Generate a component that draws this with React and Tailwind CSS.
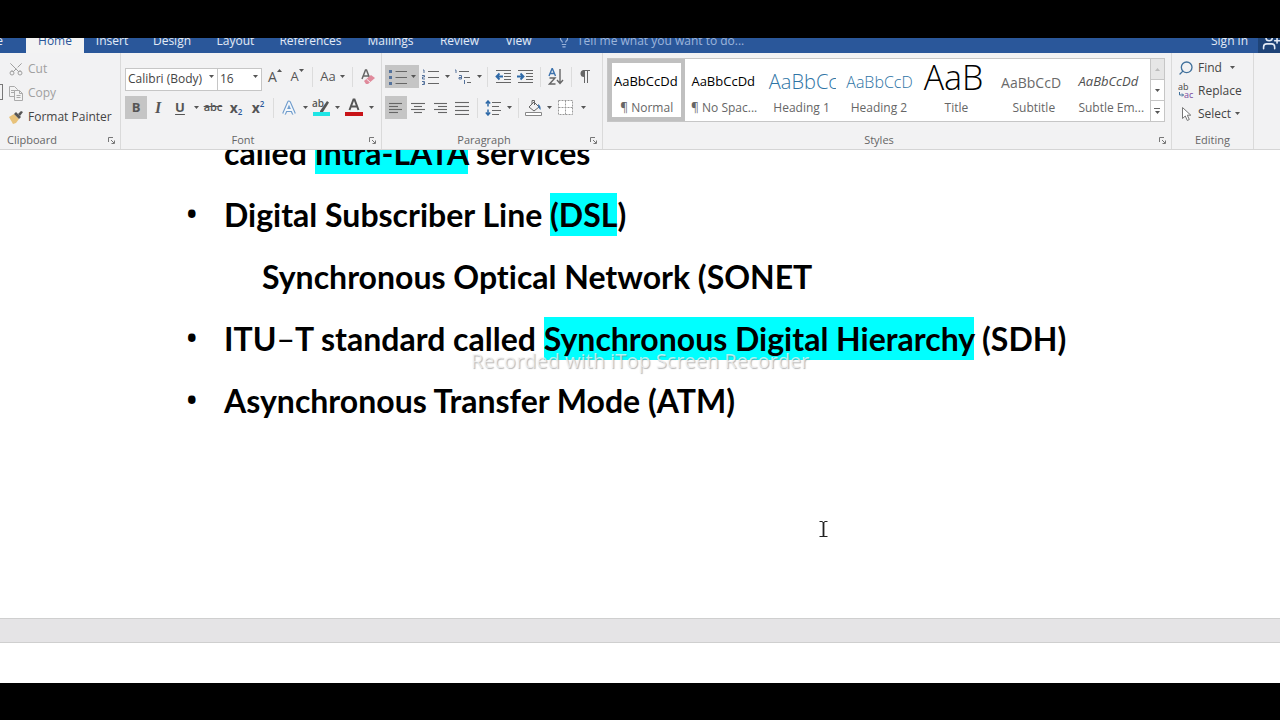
import {
  Scissors,
  Search,
  Lightbulb,
  UserPlus,
  MousePointer2,
} from "lucide-react";

const tabs = [
  { name: "Insert", width: "w-[56px]" },
  { name: "Design", width: "w-[64px]" },
  { name: "Layout", width: "w-[63px]" },
  { name: "References", width: "w-[87px]" },
  { name: "Mailings", width: "w-[73px]" },
  { name: "Review", width: "w-[65px]" },
  { name: "View", width: "w-[53px]" },
];

const styles = [
  { name: "¶ Normal", sample: "AaBbCcDd", look: "text-[13px] text-black", active: true },
  { name: "¶ No Spac...", sample: "AaBbCcDd", look: "text-[13px] text-black" },
  { name: "Heading 1", sample: "AaBbCc", look: "text-[20px] font-light text-[#2e74a5]" },
  { name: "Heading 2", sample: "AaBbCcD", look: "text-[16px] font-light text-[#2e74a5]" },
  { name: "Title", sample: "AaB", look: "text-[34px] leading-6 font-light text-black" },
  { name: "Subtitle", sample: "AaBbCcD", look: "text-[14px] text-[#6a6a6a]" },
  { name: "Subtle Em...", sample: "AaBbCcDd", look: "text-[13px] italic text-[#505050]" },
];

function Caret() {
  return (
    <svg width="5" height="3" viewBox="0 0 5 3" className="shrink-0" fill="#555">
      <path d="M0 0h5L2.5 3z" />
    </svg>
  );
}

function CaretButton({ label }) {
  return (
    <button aria-label={label} className="flex h-full w-[10px] shrink-0 items-center justify-center">
      <Caret />
    </button>
  );
}

function Tool({ label, width = "w-[22px]", active, children }) {
  return (
    <button
      aria-label={label}
      className={`flex h-full shrink-0 items-center justify-center ${width} ${
        active ? "bg-[#c5c5c5]" : ""
      }`}
    >
      {children}
    </button>
  );
}

function Separator() {
  return <div className="mx-1 h-5 w-px shrink-0 bg-[#dcdcdc]" />;
}

function Lines({ rows }) {
  return (
    <svg width="14" height="14" viewBox="0 0 14 14" stroke="#666" strokeWidth="1.1">
      {rows.map(([x1, x2, y]) => (
        <path key={y} d={`M${x1} ${y}H${x2}`} />
      ))}
    </svg>
  );
}

function Group({ name, width, align = "text-center", launcher = true, children }) {
  return (
    <section className={`flex shrink-0 flex-col border-r border-[#dadada] ${width}`}>
      <div className="h-[78px]">{children}</div>
      <div className="flex h-[18px] items-center">
        <h2 className={`flex-1 text-[11px] leading-4 text-[#666] ${align}`}>{name}</h2>
        {launcher && (
          <button aria-label={`${name} settings`} className="mr-1 ml-1 w-2">
            <svg width="7" height="7" viewBox="0 0 7 7" fill="none" stroke="#777">
              <path d="M.5 5V.5H5M3 3l3 3M6.5 3.5v3h-3" />
            </svg>
          </button>
        )}
      </div>
    </section>
  );
}

function TabBar() {
  return (
    <nav className="flex h-[15px] items-end overflow-hidden bg-[#2a579a] text-[12px] text-[#e4ebf5]">
      <a href="#file" className="flex h-6 w-[26px] shrink-0 items-center justify-start overflow-hidden">
        <span className="-ml-4">File</span>
      </a>
      <a
        href="#home"
        className="flex h-6 w-[58px] shrink-0 items-center justify-center bg-[#f3f3f3] text-[#2a579a]"
      >
        Home
      </a>
      {tabs.map((tab) => (
        <a
          key={tab.name}
          href={`#${tab.name}`}
          className={`flex h-6 shrink-0 items-center justify-center ${tab.width}`}
        >
          {tab.name}
        </a>
      ))}
      <button className="ml-3 flex h-6 items-center gap-1.5 text-[#9db5da]">
        <Lightbulb size={14} strokeWidth={2} />
        Tell me what you want to do...
      </button>
      <a href="#signin" className="ml-auto flex h-6 items-center pr-2.5">
        Sign in
      </a>
      <button aria-label="Share" className="flex h-6 w-[22px] items-center overflow-hidden bg-[#1e4377] pl-1">
        <UserPlus size={19} strokeWidth={2} className="shrink-0" />
      </button>
    </nav>
  );
}

function ClipboardGroup() {
  return (
    <Group name="Clipboard" width="w-[121px]" align="pl-[7px] text-left">
      <div className="flex h-full">
        <div className="flex w-2 flex-col justify-center">
          <div className="h-4 w-[3px] border border-l-0 border-[#777]" />
        </div>
        <div className="flex flex-col pt-1 text-[12px] text-[#a0a0a0]">
          <button className="flex h-6 items-center gap-1">
            <Scissors size={16} strokeWidth={1.5} className="-rotate-90" />
            Cut
          </button>
          <button className="flex h-6 items-center gap-1">
            <svg width="16" height="16" viewBox="0 0 16 16" fill="#f3f3f3" stroke="#aaa">
              <path d="M1.5 1.5h5l3 3v7h-8zM3 5.500h4M3 7.500h4" />
              <path d="M6.500 5.500h5l3 3v7h-8zM11.500 5.500v3h3M8.500 10.500h4M8.500 12.500h4" />
            </svg>
            Copy
          </button>
          <button className="flex h-6 items-center gap-1 whitespace-nowrap text-[#444]">
            <svg width="16" height="16" viewBox="0 0 16 16">
              <path d="M1 8l5-3 5 5-3 4-3 1z" fill="#e8c27a" />
              <path d="M6 5l2-2 5 5-2 2z" fill="#555" />
              <path d="M10 5l3-3 2 1-3 4z" fill="#555" />
            </svg>
            Format Painter
          </button>
        </div>
      </div>
    </Group>
  );
}

function FontGroup() {
  return (
    <Group name="Font" width="w-[261px]">
      <div className="flex flex-col gap-2 pt-3 pl-1 text-[#555]">
        <div className="flex h-[23px] items-center">
          <div className="relative h-full">
            <select
              aria-label="Font"
              className="h-full w-[93px] appearance-none border border-[#c6c6c6] bg-white pr-3 pl-0.5 text-[12px] text-[#444]"
            >
              <option>Calibri (Body)</option>
            </select>
            <span className="pointer-events-none absolute top-2.5 right-1">
              <Caret />
            </span>
          </div>
          <div className="relative -ml-px h-full">
            <select
              aria-label="Font size"
              className="h-full w-[45px] appearance-none border border-[#c6c6c6] bg-white pl-0.5 text-[12px] text-[#444]"
            >
              <option>16</option>
            </select>
            <span className="pointer-events-none absolute top-2.5 right-1">
              <Caret />
            </span>
          </div>
          <div className="w-[2px]" />
          <Tool label="Grow font">
            <span className="text-[14px] font-medium">A</span>
            <svg width="5" height="15" viewBox="0 0 5 15" fill="#555">
              <path d="M0 3h5L2.500 0z" />
            </svg>
          </Tool>
          <Tool label="Shrink font">
            <span className="text-[13px] font-medium">A</span>
            <svg width="5" height="15" viewBox="0 0 5 15" fill="#555">
              <path d="M0 0h5L2.500 3z" />
            </svg>
          </Tool>
          <Separator />
          <Tool label="Change case" width="w-[31px]">
            <span className="mr-1 text-[13px] font-medium">Aa</span>
            <Caret />
          </Tool>
          <Separator />
          <Tool label="Clear formatting">
            <svg width="16" height="16" viewBox="0 0 16 16" fill="none">
              <path d="M2 10L5.500 1h1L10 10M3.200 7h5.500" stroke="#666" strokeWidth="1.500" />
              <path d="M4 12l7-6 4 3-7 6H6z" fill="#e08a9b" />
              <path d="M6.500 10l4 3.500" stroke="#f3f3f3" />
            </svg>
          </Tool>
        </div>
        <div className="flex h-[23px] items-center">
          <Tool label="Bold" active>
            <span className="text-[13px] font-bold">B</span>
          </Tool>
          <Tool label="Italic">
            <span className="font-['Liberation_Serif',serif] text-[16px] font-bold italic">I</span>
          </Tool>
          <Tool label="Underline">
            <span className="text-[13px] font-bold underline underline-offset-2">U</span>
          </Tool>
          <CaretButton label="Underline style" />
          <Tool label="Strikethrough" width="w-[24px]">
            <span className="text-[11px] font-semibold line-through">abc</span>
          </Tool>
          <Tool label="Subscript">
            <span className="text-[14px] font-bold">x</span>
            <span className="pt-2 text-[8px] font-semibold text-[#2a579a]">2</span>
          </Tool>
          <Tool label="Superscript">
            <span className="text-[14px] font-bold">x</span>
            <span className="pb-2 text-[8px] font-semibold text-[#2a579a]">2</span>
          </Tool>
          <Separator />
          <Tool label="Text effects">
            <svg width="16" height="16" viewBox="0 0 16 16" fill="none" strokeLinejoin="round">
              <path d="M3 14L8 2.500 13 14M5 10h6" stroke="#6f9ccc" strokeWidth="4" />
              <path d="M3 14L8 2.500 13 14M5 10h6" stroke="#f3f7fb" strokeWidth="1.800" />
            </svg>
          </Tool>
          <CaretButton label="Text effects options" />
          <Tool label="Highlight colour" width="w-[22px]">
            <svg width="19" height="19" viewBox="0 0 19 19">
              <text x="0" y="9" fontSize="10" fontWeight="600" fill="#555">ab</text>
              <path d="M8 13l7-10 2 1.500-6 9.500-3 1z" fill="#555" />
              <path d="M1 14h17v4H1z" fill="#1fe5e5" />
            </svg>
          </Tool>
          <CaretButton label="Highlight options" />
          <Tool label="Font colour" width="w-[24px]">
            <svg width="18" height="19" viewBox="0 0 18 19" fill="none">
              <path d="M4.500 12L8.500 1.500h1L13.500 12M6 8.500h6" stroke="#555" strokeWidth="2" />
              <path d="M0 14h18v4H0z" fill="#c81318" />
            </svg>
          </Tool>
          <CaretButton label="Font colour options" />
        </div>
      </div>
    </Group>
  );
}

function ParagraphGroup() {
  return (
    <Group name="Paragraph" width="w-[221px]">
      <div className="flex flex-col gap-2 pt-3 pl-[3px] text-[#555]">
        <div className="flex h-[23px] items-center">
          <Tool label="Bullets" width="w-[34px]" active>
            <svg width="18" height="16" viewBox="0 0 18 16" className="mr-1">
              <path d="M6.500 2.500H18M6.500 8.500H18M6.500 14.500H18" stroke="#666" />
              <path d="M0 1h3v3H0zM0 7h3v3H0zM0 13h3v3H0z" fill="#54729c" />
            </svg>
            <Caret />
          </Tool>
          <Tool label="Numbering" width="w-[34px]">
            <svg width="17" height="16" viewBox="0 0 17 16" className="mr-1.5" fill="none">
              <path d="M6 2.500h11M6 8.500h11M6 14.500h11" stroke="#666" />
              <path d="M1 1h1v3M0 6.500h2.500v1.500H.5V10H3M0 12.500h2.500v3H0M1 14h1" stroke="#54729c" />
            </svg>
            <Caret />
          </Tool>
          <Tool label="Multilevel list" width="w-[30px]">
            <svg width="17" height="16" viewBox="0 0 17 16" className="mr-1.5" fill="none">
              <path d="M5 2.500h10M10 8.500h6M13 13.500h4" stroke="#666" />
              <path d="M1 1h1v3M5 6.500h2.500V10H5V8.500h2M10.500 11v4M10 12.500h1" stroke="#54729c" />
            </svg>
            <Caret />
          </Tool>
          <Separator />
          <Tool label="Decrease indent">
            <svg width="16" height="15" viewBox="0 0 16 15" fill="none">
              <path d="M1 1.500h15M9 4.500h7M9 7.500h7M9 10.500h7M1 13.500h15" stroke="#666" />
              <path d="M8 7.500H1.500M4.500 4.500l-3 3 3 3" stroke="#2f6aa8" strokeWidth="1.800" />
            </svg>
          </Tool>
          <Tool label="Increase indent">
            <svg width="16" height="15" viewBox="0 0 16 15" fill="none">
              <path d="M1 1.500h15M9 4.500h7M9 7.500h7M9 10.500h7M1 13.500h15" stroke="#666" />
              <path d="M0 7.500h6.500M3.500 4.500l3 3-3 3" stroke="#2f6aa8" strokeWidth="1.800" />
            </svg>
          </Tool>
          <Separator />
          <Tool label="Sort">
            <svg width="16" height="17" viewBox="0 0 16 17" fill="none">
              <path d="M1 8L4 .8h.4L7.500 8M2 5.500h4.500" stroke="#3c72ad" strokeWidth="1.400" />
              <path d="M1.500 10h5.500l-5.500 6H7.500" stroke="#666" strokeWidth="1.400" />
              <path d="M12 1v14M9 12l3 3.500 3-3.500" stroke="#666" strokeWidth="1.400" />
            </svg>
          </Tool>
          <Separator />
          <Tool label="Show paragraph marks" width="w-[16px]">
            <svg width="11" height="13" viewBox="0 0 11 13">
              <path d="M5 0a3.500 3.500 0 0 0 0 7z" fill="#666" />
              <path d="M5.500 0v13M8.500 0v13M4 .5h7" stroke="#666" />
            </svg>
          </Tool>
        </div>
        <div className="flex h-[23px] items-center">
          <Tool label="Align left" active>
            <Lines rows={[[0, 13, 2.5], [0, 9, 5.5], [0, 13, 8.5], [0, 9, 11.5]]} />
          </Tool>
          <Tool label="Centre">
            <Lines rows={[[0, 14, 2.5], [3, 11, 5.5], [0, 14, 8.5], [3, 11, 11.5]]} />
          </Tool>
          <Tool label="Align right">
            <Lines rows={[[1, 14, 2.5], [5, 14, 5.5], [1, 14, 8.5], [5, 14, 11.5]]} />
          </Tool>
          <Tool label="Justify">
            <Lines rows={[[0, 14, 1.5], [0, 14, 5.5], [0, 14, 9.5], [0, 14, 13.5]]} />
          </Tool>
          <Separator />
          <Tool label="Line spacing" width="w-[32px]">
            <svg width="16" height="16" viewBox="0 0 16 16" className="mr-1.5" fill="none">
              <path d="M7 2.500h9M7 6.500h7M7 10.500h9M7 14.500h7" stroke="#666" />
              <path d="M3 1.500v5M.8 3.500L3 1l2.200 2.500M3 9.500v5M.8 12.500L3 15l2.200-2.500" stroke="#2f6aa8" strokeWidth="1.500" />
            </svg>
            <Caret />
          </Tool>
          <Separator />
          <Tool label="Shading" width="w-[30px]">
            <svg width="18" height="17" viewBox="0 0 18 17" className="mr-1" fill="none">
              <path d="M4 8l5-5 5 5-5 4zM7 5V1.500h2.500V6" stroke="#666" />
              <path d="M13 5c2 1 3 3 2.500 6C14 10 13 8 13 5z" fill="#3c72ad" />
              <path d="M.5 13.500h16v3H.5z" fill="#fff" stroke="#888" />
            </svg>
            <Caret />
          </Tool>
          <Tool label="Borders" width="w-[38px]">
            <svg width="15" height="15" viewBox="0 0 15 15" className="mr-2" fill="#fff">
              <path d="M.5.5h14v14H.5zM7.500.5v14M.5 7.500h14" stroke="#999" strokeDasharray="2 1" />
            </svg>
            <Caret />
          </Tool>
        </div>
      </div>
    </Group>
  );
}

function StylesGroup() {
  return (
    <Group name="Styles" width="min-w-0 flex-1">
      <div className="pt-[5px] pr-[6px] pl-1">
        <div className="flex h-[64px] border border-[#c6c6c6] bg-white">
          {styles.map((style) => (
            <button
              key={style.name}
              className={`flex min-w-0 flex-1 flex-col justify-end overflow-hidden border-4 ${
                style.active ? "border-[#c0c0c0]" : "border-transparent"
              }`}
            >
              <span
                className={`flex h-[34px] w-full overflow-hidden pl-0.5 whitespace-nowrap ${style.look} ${
                  style.name === "Title" ? "items-start" : "items-center"
                }`}
              >
                {style.sample}
              </span>
              <span className="flex h-[18px] w-full items-center justify-center text-[12px] whitespace-nowrap text-[#666]">
                {style.name}
              </span>
            </button>
          ))}
          <div className="flex w-[14px] flex-col divide-y divide-[#c6c6c6] border-l border-[#c6c6c6]">
            <button aria-label="Previous styles" className="flex flex-1 items-center justify-center bg-[#e6e6e6]">
              <svg width="5" height="3" viewBox="0 0 5 3" fill="#bbb">
                <path d="M0 3h5L2.500 0z" />
              </svg>
            </button>
            <button aria-label="Next styles" className="flex flex-1 items-center justify-center">
              <Caret />
            </button>
            <button aria-label="All styles" className="flex flex-1 flex-col items-center justify-center gap-0.5">
              <span className="h-px w-[6px] bg-[#666]" />
              <Caret />
            </button>
          </div>
        </div>
      </div>
    </Group>
  );
}

function EditingGroup() {
  return (
    <Group name="Editing" width="w-[82px]" launcher={false}>
      <div className="flex flex-col pt-[3px] pl-1.5 text-[12px] text-[#444]">
        <button className="flex h-[23px] items-center gap-1">
          <Search size={16} strokeWidth={2} className="-scale-x-100 text-[#41719c]" />
          Find
          <span className="ml-1">
            <Caret />
          </span>
        </button>
        <button className="flex h-[23px] items-center gap-1">
          <svg width="16" height="16" viewBox="0 0 16 16">
            <text x="0" y="7" fontSize="9" fill="#444">ab</text>
            <text x="6" y="15" fontSize="9" fill="#7a4a9e">ac</text>
            <path d="M1.500 9v3h4M4 10.500l1.500 1.500L4 13.500" fill="none" stroke="#41719c" />
          </svg>
          Replace
        </button>
        <button className="flex h-[23px] items-center gap-1">
          <svg width="16" height="16" viewBox="0 0 16 16" fill="#fff" stroke="#777">
            <path d="M4.500 1.500v11l2.800-2.500 2 4.500 2-1-2-4.300h3.500z" />
          </svg>
          Select
          <Caret />
        </button>
      </div>
    </Group>
  );
}

function Highlight({ children }) {
  return <mark className="bg-[#0ff] py-0.5 text-black">{children}</mark>;
}

function Bullet() {
  return (
    <span className="-ml-[39px] inline-block w-[39px] font-['Open_Sans',sans-serif] text-[36px] leading-8 font-normal">
      •
    </span>
  );
}

function Document() {
  return (
    <main className="relative h-[468px] overflow-hidden bg-white">
      <div className="-mt-7 pl-[224px] font-['Lato',sans-serif] text-[32px] leading-[62px] font-bold whitespace-nowrap text-black [font-variant-ligatures:none]">
        <p>
          called <Highlight>Intra-LATA</Highlight> services
        </p>
        <p>
          <Bullet />
          Digital Subscriber Line <Highlight>(DSL</Highlight>)
        </p>
        <p className="pl-[38px]">Synchronous Optical Network (SONET</p>
        <p>
          <Bullet />
          ITU<span className="font-normal">–</span>T standard called{" "}
          <Highlight>Synchronous Digital Hierarchy</Highlight> (SDH)
        </p>
        <p>
          <Bullet />
          Asynchronous Transfer Mode (ATM)
        </p>
      </div>
      {/* Recorder watermark */}
      <div className="absolute inset-x-0 top-[198px] text-center text-[20px] leading-[26px] text-[#f6f6f6]/70 [text-shadow:1px_1px_1px_#7778]">
        Recorded with iTop Screen Recorder
      </div>
      {/* Text cursor */}
      <svg
        width="9"
        height="18"
        viewBox="0 0 9 18"
        className="absolute top-[370px] left-[819px]"
        fill="none"
        stroke="#222"
      >
        <path d="M.5 1.500h2.500l1.500 1 1.500-1h2.500M.5 16.500h8" />
        <path d="M4.500 2v14" strokeWidth="1.800" />
      </svg>
    </main>
  );
}

export default function App() {
  return (
    <div className="flex min-h-screen flex-col bg-black font-['Open_Sans',sans-serif]">
      <div className="h-[38px]" />
      <TabBar />
      <div className="flex border-b border-[#d5d5d5] bg-[#f2f2f3]">
        <ClipboardGroup />
        <FontGroup />
        <ParagraphGroup />
        <StylesGroup />
        <EditingGroup />
        <div className="w-[26px] shrink-0" />
      </div>
      <Document />
      <div className="h-[25px] border-y border-[#cfcfcf] bg-[#e5e4e6]" />
      <div className="h-10 bg-white" />
    </div>
  );
}
